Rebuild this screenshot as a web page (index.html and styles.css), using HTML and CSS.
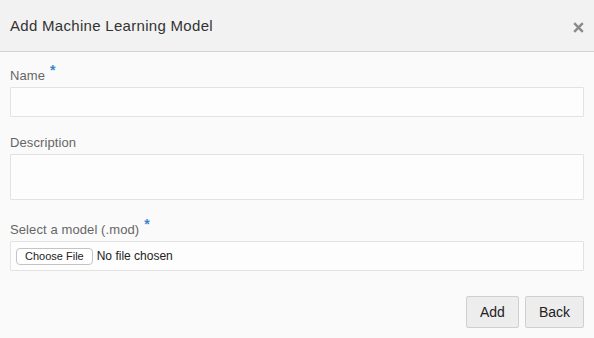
FILE: index.html
```html
<!DOCTYPE html>
<html lang="en">
<head>
<meta charset="utf-8">
<title>Add Machine Learning Model</title>
<link rel="stylesheet" href="styles.css">
</head>
<body>
<div class="modal">
  <div class="modal-header">
    <h1 class="modal-title">Add Machine Learning Model</h1>
    <button class="close" type="button" aria-label="Close">
      <svg width="11" height="11" viewBox="0 0 11 11"><path d="M1.2 1.2L9.8 9.8M9.8 1.2L1.2 9.8" stroke="#8a8a8a" stroke-width="2.4" stroke-linecap="butt"/></svg>
    </button>
  </div>
  <form class="modal-body">
    <div class="field">
      <label class="label">Name<span class="req">*</span></label>
      <div class="input"></div>
    </div>
    <div class="field field-area">
      <label class="label">Description</label>
      <div class="input textarea"></div>
    </div>
    <div class="field">
      <label class="label">Select a model (.mod)<span class="req">*</span></label>
      <div class="input file">
        <span class="file-btn">Choose File</span>
        <span class="file-name">No file chosen</span>
      </div>
    </div>
    <div class="actions">
      <button class="btn" type="button">Add</button>
      <button class="btn" type="button">Back</button>
    </div>
  </form>
</div>
</body>
</html>
```
FILE: styles.css
```css
* { box-sizing: border-box; }
html, body {
  margin: 0;
  padding: 0;
  background: #fafafa;
  font-family: "Liberation Sans", Arial, sans-serif;
}
.modal {
  width: 594px;
  height: 338px;
  background: #fafafa;
}
.modal-header {
  height: 52px;
  background: #f2f2f2;
  border-bottom: 1px solid #d2d2d2;
  display: flex;
  align-items: center;
  justify-content: space-between;
  padding: 0 10px 0 10px;
}
.modal-title {
  margin: 0;
  font-size: 15px;
  font-weight: normal;
  color: #333;
  letter-spacing: 0.3px;
  padding-bottom: 1px;
}
.close {
  border: 0;
  background: transparent;
  padding: 0;
  margin: 3px 0 0 0;
  width: 11px;
  height: 11px;
  display: flex;
}
.modal-body {
  margin: 0;
  padding: 16px 10px 0 10px;
}
.field { margin-bottom: 18px; }
.field-area { margin-bottom: 22px; }
.label {
  display: block;
  height: 16px;
  font-size: 13px;
  line-height: 16px;
  color: #666;
  margin-bottom: 3px;
  letter-spacing: 0.1px;
}
.req {
  color: #3a86d4;
  font-size: 14px;
  line-height: 0;
  font-weight: bold;
  margin-left: 5px;
  position: relative;
  top: -5px;
}
.input {
  height: 30px;
  background: #fdfdfd;
  border: 1px solid #e2e2e2;
  border-radius: 1px;
}
.textarea { height: 46px; }
.file {
  display: flex;
  align-items: center;
  padding-left: 5px;
}
.file-btn {
  font-size: 11px;
  color: #222;
  height: 17px;
  line-height: 15px;
  padding: 0 8px;
  border: 1px solid #c4c4c4;
  border-radius: 4px;
  background: #fff;
}
.file-name {
  font-size: 12px;
  color: #222;
  margin-left: 4px;
}
.actions {
  display: flex;
  justify-content: flex-end;
  gap: 6px;
  margin-top: 25px;
}
.btn {
  height: 32px;
  padding: 0 13px;
  font-family: "Liberation Sans", Arial, sans-serif;
  font-size: 14px;
  color: #222;
  background: #ededed;
  border: 1px solid #cfcfcf;
  border-radius: 2px;
}
```
